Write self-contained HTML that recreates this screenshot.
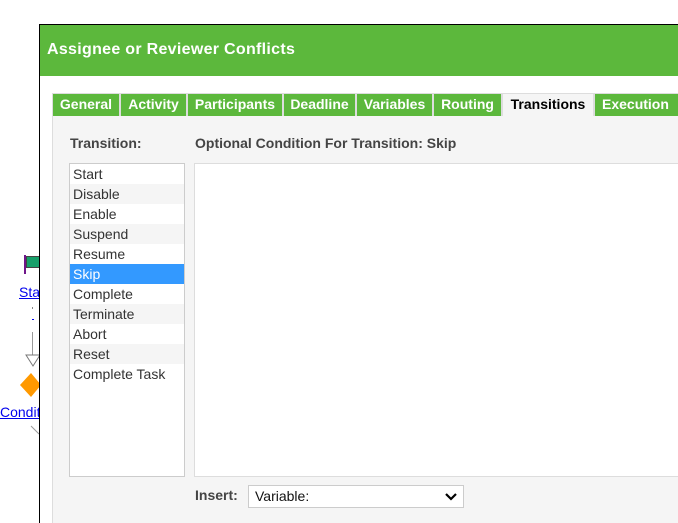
<!DOCTYPE html>
<html><head><style>
*{margin:0;padding:0;box-sizing:border-box}
html,body{width:678px;height:523px;overflow:hidden}
body{background:#fff;position:relative;font-family:"Liberation Sans",Arial,sans-serif}
.a{position:absolute}
.lnk{color:#00e;text-decoration:underline;font-size:14px}
.dlg{left:39px;top:24px;width:660px;height:499px;border:1px solid #000;border-bottom:none;background:#fff}
.hdr{left:40px;top:25px;width:640px;height:51px;background:#5cb83c;color:#fff;font-weight:bold;font-size:16px;letter-spacing:0.3px;padding:16px 0 0 7px}
.tabs{left:52px;top:93px;width:630px;height:23px;background:#ddd}
.tab{position:absolute;top:94px;height:22px;background:#5cb83c;color:#fff;font-weight:bold;font-size:14px;line-height:20px;text-align:center}
.panel{left:52px;top:116px;width:630px;height:407px;background:#f5f5f5;border-left:1px solid #ddd}
.lbl{font-weight:bold;font-size:14px;color:#444}
.list{left:69px;top:163px;width:116px;height:314px;background:#fff;border:1px solid #ccc}
.it{height:20px;font-size:14px;line-height:20px;padding-left:3px;color:#333}
.alt{background:#f5f5f5}
.sel{background:#3399ff;color:#fff}
.ta{left:194px;top:163px;width:500px;height:314px;background:#fff;border:1px solid #ddd}
.selbox{left:248px;top:485px;width:216px;height:23px;background:#fff;border:1px solid #ccc;font-size:14px;line-height:21px;padding-left:6px;color:#111}
</style></head><body>
<div class="a" style="left:24px;top:255px;width:2px;height:19px;background:#70168a"></div>
<div class="a" style="left:26px;top:256px;width:14px;height:12px;background:#17a06a;border:1px solid #444"></div>
<div class="a lnk" style="left:19px;top:284px">Sta</div>
<div class="a" style="left:32px;top:307px;width:1px;height:2px;background:#888"></div>
<div class="a" style="left:32px;top:319px;width:2px;height:1px;background:#00e"></div>
<div class="a" style="left:32px;top:332px;width:1px;height:24px;background:#999"></div>
<svg class="a" style="left:25px;top:354px" width="16" height="13"><path d="M1 1 L15 1 L8 12 Z" fill="#fff" stroke="#777"/></svg>
<svg class="a" style="left:19px;top:372px" width="22" height="26"><path d="M12 1 L22 13 L12 25 L1 13 Z" fill="#f90"/></svg>
<div class="a lnk" style="left:0px;top:404px">Condit</div>
<svg class="a" style="left:30px;top:425px" width="10" height="10"><path d="M1 1 L9 9" stroke="#999"/></svg>
<div class="a dlg"></div>
<div class="a hdr">Assignee or Reviewer Conflicts</div>
<div class="a tabs"></div>
<div class="tab" style="left:53px;width:66px">General</div>
<div class="tab" style="left:121px;width:65px">Activity</div>
<div class="tab" style="left:188px;width:94px">Participants</div>
<div class="tab" style="left:284px;width:71px">Deadline</div>
<div class="tab" style="left:357px;width:75px">Variables</div>
<div class="tab" style="left:434px;width:67px">Routing</div>
<div class="tab" style="left:503px;width:90px;background:#f5f5f5;color:#000;height:23px">Transitions</div>
<div class="tab" style="left:595px;width:110px;text-align:left;padding-left:7px">Execution Options</div>
<div class="a panel"></div>
<div class="a lbl" style="left:70px;top:135px">Transition:</div>
<div class="a lbl" style="left:195px;top:135px">Optional Condition For Transition: Skip</div>
<div class="a list">
<div class="it">Start</div><div class="it alt">Disable</div><div class="it">Enable</div><div class="it alt">Suspend</div><div class="it">Resume</div><div class="it sel">Skip</div><div class="it">Complete</div><div class="it alt">Terminate</div><div class="it">Abort</div><div class="it alt">Reset</div><div class="it">Complete Task</div>
</div>
<div class="a ta"></div>
<div class="a lbl" style="left:195px;top:487px">Insert:</div>
<div class="a selbox">Variable:<svg style="position:absolute;right:6px;top:7px" width="12" height="8"><path d="M1 1 L6 6 L11 1" fill="none" stroke="#000" stroke-width="2.2"/></svg></div>
</body></html>
